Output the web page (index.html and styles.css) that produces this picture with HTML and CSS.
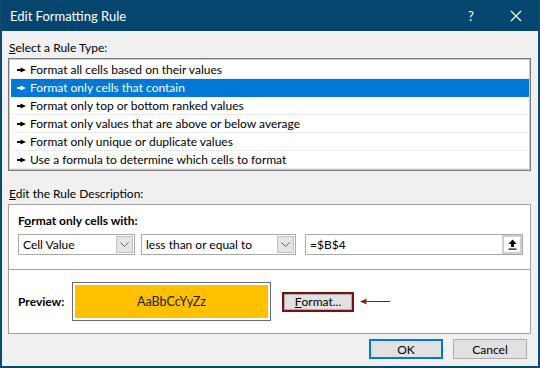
FILE: index.html
```html
<!DOCTYPE html>
<html>
<head>
<meta charset="utf-8">
<link rel="stylesheet" href="styles.css">
</head>
<body>
<div class="window">
  <div class="titlebar">
    <span class="title">Edit Formatting Rule</span>
    <span class="tb-help">?</span>
    <span class="tb-close">
      <svg width="12" height="12" viewBox="0 0 12 12"><path d="M1 1 L11 11 M11 1 L1 11" stroke="#fff" stroke-width="1.2" fill="none"/></svg>
    </span>
  </div>
  <div class="content">
    <div class="label label-first"><u>S</u>elect a Rule Type:</div>
    <div class="list">
      <div class="row"><svg class="arr" width="9" height="6" viewBox="0 0 9 6"><path d="M0 2 H4 V4 H0 Z M3.5 0.5 L9 3 L3.5 5.5 Z" fill="#000"/></svg>Format all cells based on their values</div>
      <div class="row sel"><svg class="arr" width="9" height="6" viewBox="0 0 9 6"><path d="M0 2 H4 V4 H0 Z M3.5 0.5 L9 3 L3.5 5.5 Z" fill="#fff"/></svg>Format only cells that contain</div>
      <div class="row"><svg class="arr" width="9" height="6" viewBox="0 0 9 6"><path d="M0 2 H4 V4 H0 Z M3.5 0.5 L9 3 L3.5 5.5 Z" fill="#000"/></svg>Format only top or bottom ranked values</div>
      <div class="row"><svg class="arr" width="9" height="6" viewBox="0 0 9 6"><path d="M0 2 H4 V4 H0 Z M3.5 0.5 L9 3 L3.5 5.5 Z" fill="#000"/></svg>Format only values that are above or below average</div>
      <div class="row"><svg class="arr" width="9" height="6" viewBox="0 0 9 6"><path d="M0 2 H4 V4 H0 Z M3.5 0.5 L9 3 L3.5 5.5 Z" fill="#000"/></svg>Format only unique or duplicate values</div>
      <div class="row"><svg class="arr" width="9" height="6" viewBox="0 0 9 6"><path d="M0 2 H4 V4 H0 Z M3.5 0.5 L9 3 L3.5 5.5 Z" fill="#000"/></svg>Use a formula to determine which cells to format</div>
    </div>
    <div class="label label-second"><u>E</u>dit the Rule Description:</div>
    <div class="desc">
      <div class="desc-top">
        <div class="bold">F<u>o</u>rmat only cells with:</div>
        <div class="controls">
          <div class="combo combo1"><span class="ctext">Cell Value</span><span class="cbtn"><svg width="9" height="5" viewBox="0 0 9 5"><path d="M0.5 0.5 L4.5 4.5 L8.5 0.5" stroke="#606060" fill="none" stroke-width="1"/></svg></span></div>
          <div class="combo combo2"><span class="ctext">less than or equal to</span><span class="cbtn"><svg width="9" height="5" viewBox="0 0 9 5"><path d="M0.5 0.5 L4.5 4.5 L8.5 0.5" stroke="#606060" fill="none" stroke-width="1"/></svg></span></div>
          <div class="combo input"><span class="ctext">=$B$4</span><span class="ubtn"><svg width="9" height="11" viewBox="0 0 9 11"><path d="M4.5 0.5 L8.5 5 H6 V8 H3 V5 H0.5 Z" fill="#000"/><rect x="0.5" y="9.5" width="8" height="1.2" fill="#000"/></svg></span></div>
        </div>
      </div>
      <div class="desc-bottom">
        <span class="bold plabel">Preview:</span>
        <div class="preview"><div class="preview-in">AaBbCcYyZz</div></div>
        <div class="fmt-wrap"><span class="btn fmt"><u>F</u>ormat...</span></div>
        <svg class="pointer" width="30" height="7" viewBox="0 0 30 7"><path d="M0 3.5 L7 0.5 L6 3 H30 V4 H6 L7 6.5 Z" fill="#7a1a1a"/></svg>
      </div>
    </div>
    <div class="buttons">
      <span class="btn ok">OK</span>
      <span class="btn cancel">Cancel</span>
    </div>
  </div>
</div>
</body>
</html>
```

FILE: styles.css
```css
html, body {
  margin: 0;
  padding: 0;
  background: #ffffff;
}
body {
  font-family: Lato, "Noto Sans", "DejaVu Sans", sans-serif;
  font-size: 12px;
  color: #000;
}
.window {
  width: 540px;
  height: 368px;
  box-sizing: border-box;
  background: #f0f0f0;
  border-left: 2px solid #0c4a6f;
  border-right: 2px solid #0c4a6f;
  border-bottom: 2px solid #0c4a6f;
  display: flex;
  flex-direction: column;
}
.titlebar {
  height: 31px;
  background: #05466e;
  color: #fff;
  display: flex;
  align-items: center;
  padding-left: 8px;
  flex-shrink: 0;
}
.title {
  font-size: 13px;
  flex: 1;
}
.tb-help {
  font-size: 13px;
  width: 14px;
  margin-right: 28px;
}
.tb-close {
  width: 12px;
  height: 12px;
  margin-right: 16px;
  display: flex;
}
.content {
  padding: 0 0 0 6px;
  display: flex;
  flex-direction: column;
}
.label {
  height: 16px;
  line-height: 16px;
  padding-left: 1px;
}
.label-first {
  margin-top: 9px;
}
.label-second {
  margin-top: 15px;
}
.list {
  margin-top: 2px;
  width: 523px;
  box-sizing: border-box;
  border: 1px solid #7a7a7a;
  outline: 1px solid #c8c8c8;
  outline-offset: -2px;
  background: #fff;
  padding: 2px 1px 1px 2px;
}
.row {
  height: 17px;
  line-height: 17px;
  border-bottom: 1px solid #ececec;
  display: flex;
  align-items: center;
  padding-left: 6px;
  white-space: nowrap;
}
.row.sel {
  background: #0078d7;
  color: #fff;
  border-bottom-color: #0078d7;
}
.arr {
  margin-right: 4px;
  flex-shrink: 0;
}
.desc {
  margin-top: 2px;
  width: 523px;
  display: flex;
  flex-direction: column;
}
.desc-top {
  height: 65px;
  box-sizing: border-box;
  border: 1px solid #a0a0a0;
  border-bottom: none;
  background: #fff;
  padding: 8px 0 0 9px;
}
.bold {
  font-weight: bold;
  font-size: 12px;
  line-height: 16px;
}
.plabel {
  width: 54px;
  flex-shrink: 0;
}
.controls {
  display: flex;
  margin-top: 5px;
}
.combo {
  height: 21px;
  box-sizing: border-box;
  border: 1px solid #a9a9a9;
  background: #fff;
  display: flex;
  align-items: center;
  padding-left: 4px;
}
.combo1 {
  width: 117px;
  margin-right: 6px;
}
.combo2 {
  width: 155px;
  margin-right: 9px;
}
.input {
  width: 218px;
}
.ctext {
  flex: 1;
  white-space: nowrap;
}
.cbtn {
  width: 17px;
  height: 17px;
  box-sizing: border-box;
  background: #e5e5e5;
  border: 1px solid #c2c2c2;
  margin-right: 1px;
  display: flex;
  align-items: center;
  justify-content: center;
}
.ubtn {
  width: 20px;
  height: 19px;
  box-sizing: border-box;
  background: #fff;
  border: 2px solid #cfcfcf;
  display: flex;
  align-items: center;
  justify-content: center;
}
.desc-bottom {
  height: 65px;
  box-sizing: border-box;
  border: 1px solid #a0a0a0;
  background: #fff;
  display: flex;
  align-items: center;
  padding-left: 9px;
}
.preview {
  width: 199px;
  height: 39px;
  box-sizing: border-box;
  border: 1px solid #6e6e6e;
  padding: 2px;
}
.preview-in {
  height: 100%;
  background: #ffc000;
  display: flex;
  align-items: center;
  justify-content: center;
  color: #222;
  font-size: 12.5px;
}
.fmt-wrap {
  margin-left: 11px;
  border: 2px solid #7a1010;
  display: flex;
}
.btn {
  display: flex;
  align-items: center;
  justify-content: center;
  box-sizing: border-box;
  background: #e1e1e1;
}
.fmt {
  width: 68px;
  height: 16px;
  border: 1px solid #adadad;
}
.pointer {
  margin-left: 6px;
}
.buttons {
  display: flex;
  margin-top: 5px;
  padding-left: 361px;
}
.ok {
  width: 74px;
  height: 20px;
  border: 2px solid #0078d7;
}
.cancel {
  width: 74px;
  height: 20px;
  border: 1px solid #adadad;
  margin-left: 10px;
}
```
